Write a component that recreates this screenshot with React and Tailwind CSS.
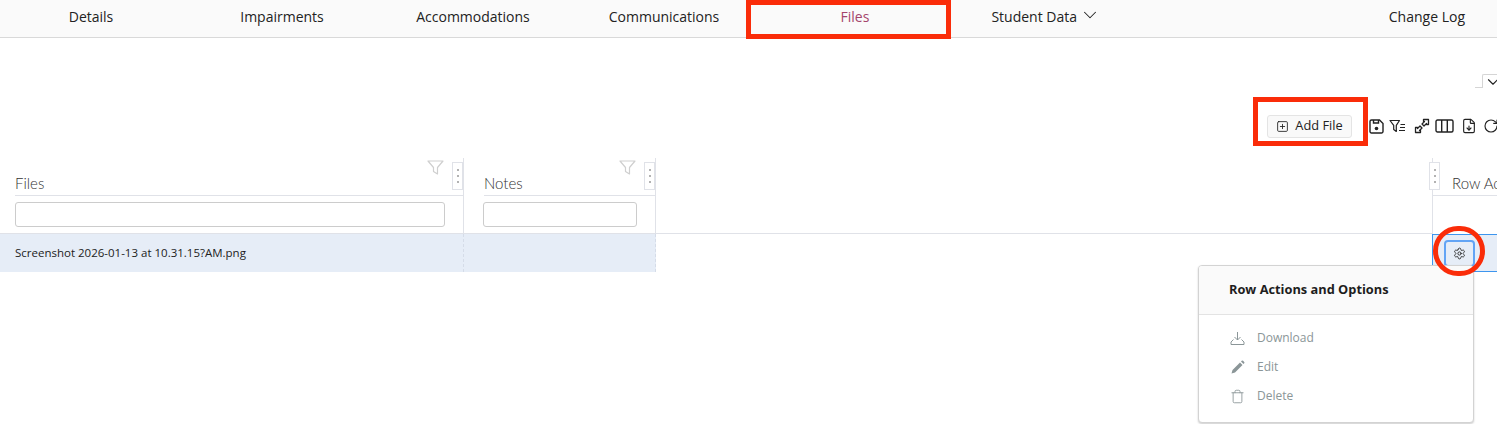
import React from 'react';
import { FileDown, RotateCw, SquarePlus, Settings, Trash, ChevronDown } from 'lucide-react';

const TABS = ['Details', 'Impairments', 'Accommodations', 'Communications', 'Files'];

function NavBar() {
  return (
    <nav className="relative flex h-[38px] items-center border-b border-[#d9d9d9] bg-[#fafafa] pb-[4px] text-[14px] text-[#222]">
      <div className="-ml-[4.5px] flex items-center">
        {TABS.map((tab) => (
          <div key={tab} className={`w-[191px] text-center ${tab === 'Files' ? 'text-[#a4446c]' : ''}`}>
            {tab}
          </div>
        ))}
        <div className="flex h-[20px] w-[191px] items-center justify-center gap-[1.5px]">
          Student Data
          <ChevronDown className="mb-[3px] h-[22px] w-[22px]" strokeWidth={1.1} />
        </div>
      </div>
      <div className="ml-auto pr-[32px]">Change Log</div>
    </nav>
  );
}

function SaveIcon() {
  return (
    <svg className="h-[15px] w-[15px] shrink-0" viewBox="0 0 15 15" fill="none" stroke="#222" strokeWidth="1.4">
      <path d="M2.500 1h8L14 4.500v8a1.500 1.500 0 0 1-1.500 1.500h-10A1.500 1.500 0 0 1 1 12.500v-10A1.500 1.500 0 0 1 2.500 1z" />
      <path d="M4.500 1v3h5V1" />
      <circle cx="7.500" cy="9.500" r="1.800" fill="#222" stroke="none" />
    </svg>
  );
}

function FilterLinesIcon() {
  return (
    <svg className="h-[16px] w-[17px] shrink-0" viewBox="0 0 17 16" fill="none" stroke="#222" strokeWidth="1.2">
      <path d="M1 2.500h9.500L7.300 7.400V13.500L4.700 11.500V7.400z" strokeLinejoin="round" />
      <path d="M11.500 6.500h4.500M11 9.500h5M10 12.500h6" />
    </svg>
  );
}

function ExpandIcon() {
  return (
    <svg className="h-[16px] w-[16px] shrink-0" viewBox="0 0 16 16" fill="none" stroke="#222" strokeWidth="1.3">
      <path d="M9.500 1.500h5v5h-2v-1L10 8 8 6l2.500-2.500h-1z" strokeLinejoin="round" />
      <path d="M1.500 9.500h2v1L6 8l2 2-2.500 2.500h1v2h-5z" strokeLinejoin="round" />
    </svg>
  );
}

function ColumnsIcon() {
  return (
    <svg className="h-[14px] w-[19px] shrink-0" viewBox="0 0 19 14" fill="none" stroke="#222" strokeWidth="1.4">
      <rect x="1" y="1" width="17" height="12" rx="1.500" />
      <path d="M6.700 1v12M12.300 1v12" />
    </svg>
  );
}

function FunnelIcon() {
  return (
    <svg className="absolute right-[19px] top-[2px] h-[15px] w-[17px]" viewBox="0 0 17 15" fill="none" stroke="#cfcfcf" strokeWidth="1.200">
      <path d="M1 1h15L10.500 7.500V14L6.500 11.500V7.500z" strokeLinejoin="round" />
    </svg>
  );
}

function DragHandle({ className }) {
  return (
    <div className={`absolute top-[4px] flex h-[28px] w-[11px] flex-col items-center justify-center gap-[4px] border border-[#e0e2e8] bg-white ${className}`}>
      <i className="h-[2px] w-[2px] rounded-full bg-[#999]" />
      <i className="h-[2px] w-[2px] rounded-full bg-[#999]" />
      <i className="h-[2px] w-[2px] rounded-full bg-[#999]" />
    </div>
  );
}

function Toolbar() {
  return (
    <div className="flex flex-col items-end">
      <div className="mt-[36px] flex h-[14px] w-[22px] items-end">
        <div className="h-px w-[7px] shrink-0 bg-[#d5d5d5]" />
        <div className="flex h-[14px] w-[15px] shrink-0 items-center overflow-hidden rounded-tl-[2px] border-l border-t border-[#d5d5d5] pl-[1px]">
          <ChevronDown className="h-[18px] w-[18px] shrink-0 text-[#222]" strokeWidth={1.5} />
        </div>
      </div>
      <div className="mt-[26px] flex h-[24px] items-center">
        <div className="flex h-[23px] w-[85px] items-center justify-center gap-[6px] rounded-[3px] border border-[#e4e4e4] bg-[#f9f9f9] text-[12.8px] text-[#222]">
          <SquarePlus className="h-[13px] w-[13px]" strokeWidth={1.6} />
          Add File
        </div>
        <div className="ml-[17px] flex w-[128px] items-center overflow-hidden text-[#222]">
          <SaveIcon />
          <div className="ml-[5px]"><FilterLinesIcon /></div>
          <div className="ml-[8px]"><ExpandIcon /></div>
          <div className="ml-[5px]"><ColumnsIcon /></div>
          <FileDown className="ml-[7px] h-[16px] w-[16px] shrink-0" strokeWidth={1.7} />
          <RotateCw className="ml-[6px] h-[16px] w-[16px] shrink-0" strokeWidth={1.7} />
        </div>
      </div>
    </div>
  );
}

function ColumnHeader({ title }) {
  return (
    <div className="relative flex h-[38px] items-end border-b border-r border-[#e0e2e8]">
      <span className="pb-[1px] font-['Lato'] text-[15px] font-light text-[#333]">{title}</span>
      <FunnelIcon />
      <DragHandle className="right-0" />
    </div>
  );
}

function Grid() {
  return (
    <div className="mt-[20px] grid grid-cols-[464px_192px_1fr_65px]">
      <div className="pl-[15px]"><ColumnHeader title="Files" /></div>
      <div className="pl-[20px]"><ColumnHeader title="Notes" /></div>
      <div />
      <div className="relative flex h-[38px] items-end border-b border-l border-[#e0e2e8] pl-[19px]">
        <span className="whitespace-nowrap pb-[1px] font-['Lato'] text-[15px] font-light text-[#333]">Row Actions</span>
        <DragHandle className="-left-[4px]" />
      </div>

      <div className="flex h-[38px] items-center border-b border-r border-[#e0e2e8] pl-[15px] pr-[18px]">
        <input className="h-[25px] w-full rounded-[3px] border border-[#ccc] bg-white" />
      </div>
      <div className="flex h-[38px] items-center border-b border-r border-[#e0e2e8] pl-[19px] pr-[18px]">
        <input className="h-[25px] w-full rounded-[3px] border border-[#ccc] bg-white" />
      </div>
      <div className="border-b border-[#e0e2e8]" />
      <div className="-mb-px border-b border-l border-[#e0e2e8]" />

      <div className="flex h-[38px] items-center border-r border-dashed border-[#d5dce8] bg-[#e6edf7] pl-[15px] text-[11.5px] text-[#222]">
        Screenshot 2026-01-13 at 10.31.15?AM.png
      </div>
      <div className="border-r border-dashed border-[#d5dce8] bg-[#e6edf7]" />
      <div />
      <div className="relative flex items-center border border-r-0 border-[#3d95ee] bg-[#e6edf7] pl-[11px]">
        <div className="flex h-[27px] w-[31px] items-center justify-center rounded-[4px] border-2 border-[#62a4f5] bg-[#e6edf7]">
          <Settings className="h-[13px] w-[13px] text-[#222]" strokeWidth={1.6} />
        </div>
      </div>
    </div>
  );
}

function RowMenu() {
  return (
    <div className="absolute left-[1198px] top-[265px] w-[276px] overflow-hidden rounded-[4px] border border-[#d3d3d3] bg-white text-[12px] shadow-[0_1px_2px_rgba(0,0,0,0.2)]">
      <div className="flex h-[49px] items-center border-b border-[#e3e3e3] bg-[#fafafa] pl-[30px] text-[12.8px] font-bold text-[#1d1d1d]">
        Row Actions and Options
      </div>
      <div className="flex flex-col gap-[9px] pb-[16px] pl-[31px] pt-[13px] text-[#8b9698]">
        <div className="flex h-[20px] items-center gap-[12px]">
          <svg className="h-[15px] w-[15px]" viewBox="0 0 15 15" fill="none" stroke="#8b9698" strokeWidth="1">
            <path d="M7.500 1v8M4.500 6l3 3 3-3" />
            <path d="M3.500 8.500 1 11v2.500h13V11l-2.500-2.500" strokeLinejoin="round" />
          </svg>
          Download
        </div>
        <div className="flex h-[20px] items-center gap-[12px]">
          <svg className="h-[15px] w-[15px]" viewBox="0 0 15 15" fill="#8b9698">
            <path d="M10 2.500l2.500 2.500-7.500 7.500-3.500 1 1-3.500zM11 1.500l2.500 2.500 .7-.7a1 1 0 0 0 0-1.400l-1.100-1.100a1 1 0 0 0-1.400 0z" />
          </svg>
          Edit
        </div>
        <div className="flex h-[20px] items-center gap-[12px]">
          <Trash className="h-[15px] w-[15px]" strokeWidth={1.4} />
          Delete
        </div>
      </div>
    </div>
  );
}

export default function App() {
  return (
    <div className="relative h-[424px] w-[1497px] overflow-hidden bg-white font-['Open_Sans',sans-serif]">
      <NavBar />
      <Toolbar />
      <Grid />
      <RowMenu />

      {/* red callouts drawn on top of the screenshot */}
      <div className="absolute left-[746px] top-0 h-[39px] w-[205px] border-[5px] border-[#fa2c09]" />
      <div className="absolute left-[1253px] top-[97px] h-[49px] w-[115px] border-[5px] border-[#fa2c09]" />
      <div className="absolute left-[1433px] top-[226px] h-[50px] w-[52px] rounded-full border-[5px] border-[#fa2c09]" />
    </div>
  );
}
